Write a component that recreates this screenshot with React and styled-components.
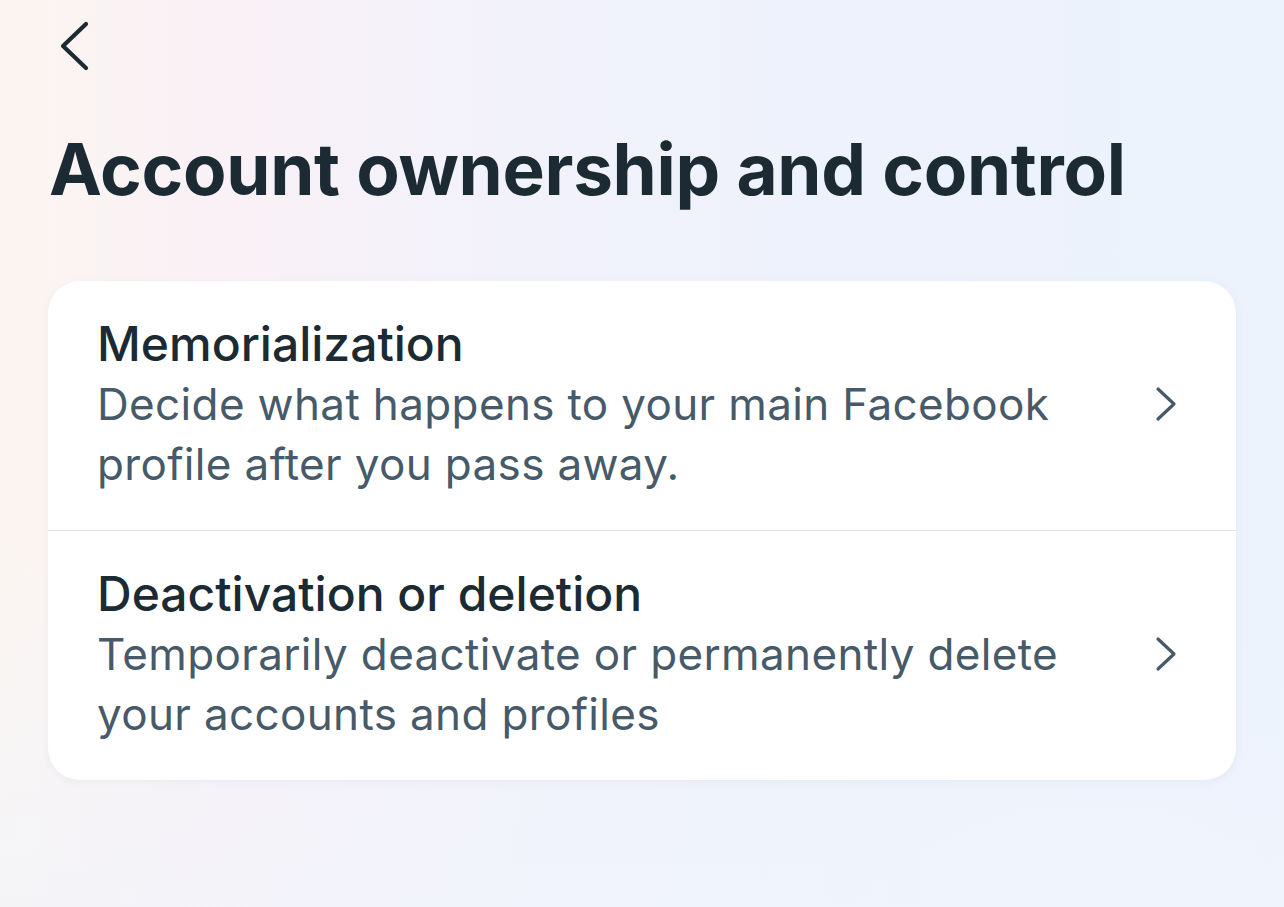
import React from 'react';
import styled, { createGlobalStyle } from 'styled-components';

const GlobalStyle = createGlobalStyle`
  html, body {
    margin: 0;
    padding: 0;
  }
  body {
    font-family: Inter, "Noto Sans", "Liberation Sans", sans-serif;
    -webkit-font-smoothing: antialiased;
  }
`;

const Page = styled.div`
  min-height: 907px;
  box-sizing: border-box;
  padding: 20px 48px 0 48px;
  background:
    linear-gradient(180deg, rgba(255, 255, 255, 0) 60%, rgba(240, 244, 252, 0.6) 100%),
    linear-gradient(90deg, #fbf5f1 0%, #f9f1f6 18%, #f2f2fb 40%, #edf2fc 70%, #ecf3fd 100%);
`;

const BackButton = styled.button`
  display: flex;
  align-items: center;
  justify-content: center;
  width: 52px;
  height: 52px;
  margin-left: 2px;
  padding: 0;
  border: none;
  background: none;
  color: #1c2b33;
  cursor: pointer;
`;

const Title = styled.h1`
  margin: 55px 0 0 1px;
  font-size: 71px;
  line-height: 84px;
  font-weight: 700;
  letter-spacing: -0.3px;
  color: #1c2b33;
`;

const Card = styled.div`
  margin-top: 70px;
  width: 1188px;
  background: #ffffff;
  border-radius: 32px;
  box-shadow: 0 2px 10px rgba(40, 60, 100, 0.05);
  overflow: hidden;
`;

const Row = styled.div`
  display: flex;
  align-items: center;
  padding: 33px 58px 36px 49px;
  border-top: ${(p) => (p.first ? 'none' : '1px solid #dfe3e8')};
  cursor: pointer;
`;

const RowText = styled.div`
  flex: 1;
  min-width: 0;
`;

const RowTitle = styled.div`
  font-size: 48px;
  line-height: 60px;
  font-weight: 500;
  color: #1c2b33;
`;

const RowSub = styled.div`
  font-size: 44px;
  line-height: 60px;
  font-weight: 400;
  letter-spacing: 0.35px;
  color: #465a69;
  max-width: 1010px;
`;

const ChevronWrap = styled.div`
  flex: none;
  display: flex;
  color: #465a69;
`;

const ChevronRight = () => (
  <svg width="24" height="36" viewBox="0 0 24 36" fill="none">
    <path
      d="M4 3 L20 18 L4 33"
      stroke="currentColor"
      strokeWidth="3.2"
      strokeLinecap="round"
      strokeLinejoin="round"
    />
  </svg>
);

const items = [
  {
    title: 'Memorialization',
    sub: 'Decide what happens to your main Facebook profile after you pass away.',
  },
  {
    title: 'Deactivation or deletion',
    sub: 'Temporarily deactivate or permanently delete your accounts and profiles',
  },
];

export default function App() {
  return (
    <>
      <GlobalStyle />
      <Page>
        <BackButton aria-label="Back">
          <svg width="40" height="52" viewBox="0 0 40 52" fill="none">
            <path
              d="M30 4 L7 26 L30 48"
              stroke="currentColor"
              strokeWidth="4.2"
              strokeLinecap="round"
              strokeLinejoin="round"
            />
          </svg>
        </BackButton>
        <Title>Account ownership and control</Title>
        <Card>
          {items.map((it, i) => (
            <Row key={it.title} first={i === 0}>
              <RowText>
                <RowTitle>{it.title}</RowTitle>
                <RowSub>{it.sub}</RowSub>
              </RowText>
              <ChevronWrap>
                <ChevronRight />
              </ChevronWrap>
            </Row>
          ))}
        </Card>
      </Page>
    </>
  );
}
